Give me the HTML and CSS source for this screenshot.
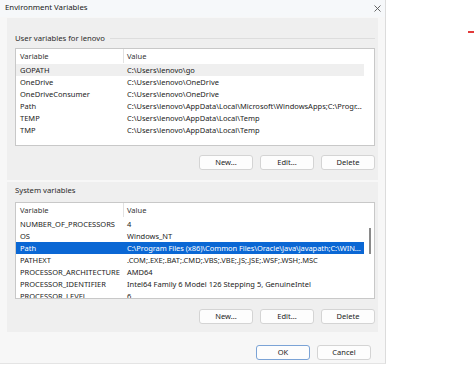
FILE: index.html
```html
<!DOCTYPE html>
<html>
<head>
<meta charset="utf-8">
<link rel="stylesheet" href="styles.css">
</head>
<body>
<div class="screen">
  <div class="dialog">
    <div class="titlebar">
      <span class="title">Environment Variables</span>
      <svg class="close" width="7" height="7" viewBox="0 0 7 7"><path d="M0.5 0.5L6.5 6.5M6.5 0.5L0.5 6.5" stroke="#555" stroke-width="0.9"/></svg>
    </div>
    <div class="group group-user">
      <div class="legend"><span>User variables for lenovo</span><i class="rule"></i></div>
      <div class="list list-user">
        <div class="row head"><span class="c1">Variable</span><span class="c2">Value</span></div>
        <div class="row hover"><span class="c1">GOPATH</span><span class="c2">C:\Users\lenovo\go</span></div>
        <div class="row"><span class="c1">OneDrive</span><span class="c2">C:\Users\lenovo\OneDrive</span></div>
        <div class="row"><span class="c1">OneDriveConsumer</span><span class="c2">C:\Users\lenovo\OneDrive</span></div>
        <div class="row"><span class="c1">Path</span><span class="c2">C:\Users\lenovo\AppData\Local\Microsoft\WindowsApps;C:\Progr...</span></div>
        <div class="row"><span class="c1">TEMP</span><span class="c2">C:\Users\lenovo\AppData\Local\Temp</span></div>
        <div class="row"><span class="c1">TMP</span><span class="c2">C:\Users\lenovo\AppData\Local\Temp</span></div>
      </div>
      <div class="buttons">
        <button class="btn">New...</button>
        <button class="btn">Edit...</button>
        <button class="btn">Delete</button>
      </div>
    </div>
    <div class="group group-sys">
      <div class="legend"><span>System variables</span></div>
      <div class="list list-sys">
        <div class="row head"><span class="c1">Variable</span><span class="c2">Value</span></div>
        <div class="row"><span class="c1">NUMBER_OF_PROCESSORS</span><span class="c2">4</span></div>
        <div class="row"><span class="c1">OS</span><span class="c2">Windows_NT</span></div>
        <div class="row selected"><span class="c1">Path</span><span class="c2">C:\Program Files (x86)\Common Files\Oracle\Java\javapath;C:\WIN...</span></div>
        <div class="row"><span class="c1">PATHEXT</span><span class="c2">.COM;.EXE;.BAT;.CMD;.VBS;.VBE;.JS;.JSE;.WSF;.WSH;.MSC</span></div>
        <div class="row"><span class="c1">PROCESSOR_ARCHITECTURE</span><span class="c2">AMD64</span></div>
        <div class="row"><span class="c1">PROCESSOR_IDENTIFIER</span><span class="c2">Intel64 Family 6 Model 126 Stepping 5, GenuineIntel</span></div>
        <div class="row"><span class="c1">PROCESSOR_LEVEL</span><span class="c2">6</span></div>
        <div class="scrollthumb"></div>
      </div>
      <div class="buttons">
        <button class="btn">New...</button>
        <button class="btn">Edit...</button>
        <button class="btn">Delete</button>
      </div>
    </div>
    <div class="footer">
      <button class="btn btn-ok">OK</button>
      <button class="btn">Cancel</button>
    </div>
  </div>
  <div class="side"><i class="redmark"></i></div>
</div>
</body>
</html>
```
FILE: styles.css
```css
* { box-sizing: border-box; }
html, body { margin: 0; padding: 0; background: #ffffff; }
body { font-family: "Noto Sans", "Open Sans", sans-serif; font-size: 7.5px; color: #1b1b1b; }
.screen { display: flex; width: 474px; height: 366px; overflow: hidden; }
.dialog {
  width: 386px; height: 364px; background: #f7f7f7;
  border-right: 1px solid #dcdcdc; border-bottom: 1px solid #e4e4e4;
  display: flex; flex-direction: column;
}
.titlebar {
  height: 17px; background: #f6f8fa; display: flex; align-items: center;
  justify-content: space-between; padding: 0 4px 3px 5px;
}
.title { font-size: 7.8px; color: #202020; }
.close { margin-top: 2px; }
.group { margin: 1px 7px 0 7px; background: #efefef; padding: 0 0 0 8px; }
.group-user { height: 162px; padding-top: 14px; }
.group-sys { height: 150px; margin-top: 2px; padding-top: 2px; }
.legend { height: 12px; display: flex; align-items: center; gap: 5px; color: #2a2a2a; font-size: 7.7px; }
.legend .rule { flex: 1; height: 1px; background: #dddddd; margin-right: 3px; }
.list {
  position: relative; margin-top: 4px; width: 360px; background: #ffffff;
  border: 1px solid #c8c8c8; overflow: hidden;
}
.list-user { height: 98px; }
.list-sys { height: 97px; margin-top: 6px; }
.row { display: flex; height: 12px; align-items: center; width: 348px; white-space: nowrap; }
.row.head { height: 14px; margin-bottom: 1px; color: #333; }
.row .c1 { width: 108px; padding-left: 4px; flex: none; }
.row .c2 { flex: 1; padding-left: 3px; }
.row.head .c1 { border-right: 1px solid #e2e2e2; height: 14px; line-height: 14px; }
.row.hover { background: #efefef; }
.row.selected { background: #0a67d4; color: #ffffff; }
.row.selected .c2 { letter-spacing: -0.07px; }
.scrollthumb { position: absolute; left: 353px; top: 25px; width: 1.5px; height: 26px; background: #8a8a8a; }
.buttons { display: flex; justify-content: flex-end; gap: 7px; margin-top: 9px; width: 360px; }
.group-sys .buttons { margin-top: 10px; }
.btn {
  font-family: inherit; font-size: 7.5px; color: #1b1b1b;
  width: 54px; height: 15px; background: #fdfdfd; border: 1px solid #d4d4d4;
  border-radius: 3px; padding: 0; line-height: 13px;
}
.footer { display: flex; justify-content: flex-end; gap: 7px; padding-right: 14px; margin-top: 13px; }
.btn-ok { border-color: #7ba3d6; }
.side { flex: 1; position: relative; }
.redmark { position: absolute; right: 0; top: 31px; width: 6px; height: 2px; background: #e23a3a; }
```
